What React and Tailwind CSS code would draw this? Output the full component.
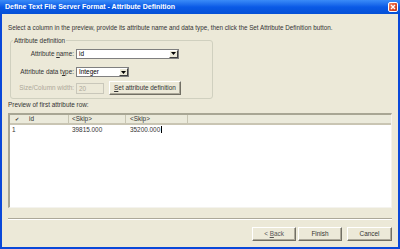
import React from "react";

function CloseBtn() {
  return (
    <div className="w-[10px] h-[10px] rounded-[2px] border border-white bg-gradient-to-br from-[#f08a6a] via-[#e0502c] to-[#c23a1c] flex items-center justify-center">
      <svg width="6" height="6" viewBox="0 0 6 6">
        <path d="M1 1 L5 5 M5 1 L1 5" stroke="white" strokeWidth="1.4" />
      </svg>
    </div>
  );
}

function DropBtn() {
  return (
    <div className="w-[9px] h-full bg-[#ece9d8] border-t border-l border-t-white border-l-white border-r border-b border-r-[#404040] border-b-[#404040] flex items-center justify-center">
      <svg width="5" height="3" viewBox="0 0 5 3">
        <path d="M0 0 H5 L2.5 3 Z" fill="black" />
      </svg>
    </div>
  );
}

function Btn({ children, className = "" }) {
  return (
    <div
      className={
        "h-[14px] bg-[#ece9d8] border-t border-l border-t-white border-l-white border-r border-b border-r-[#716f64] border-b-[#716f64] shadow-[inset_-1px_-1px_0_#aca899] flex items-center justify-center " +
        className
      }
    >
      {children}
    </div>
  );
}

export default function App() {
  return (
    <div className="w-[400px] h-[249px] bg-[#0a48d9] flex flex-col font-['Liberation_Sans',sans-serif] text-[6.4px] leading-[8px] text-black overflow-hidden">
      {/* title bar */}
      <div className="h-[14px] shrink-0 flex items-center justify-between pl-[5px] pr-[2px] bg-gradient-to-b from-[#3a8bf8] via-[#0a5ae6] to-[#0550d6]">
        <span className="text-white font-bold text-[7px] leading-[8px]">
          Define Text File Server Format - Attribute Definition
        </span>
        <CloseBtn />
      </div>

      <div className="flex-1 mx-[2px] mb-[2px] bg-[#ece9d8] flex flex-col px-[6px]">
        <div className="mt-[10px] h-[8px] text-[6.3px] text-[#333]">
          Select a column in the preview, provide its attribute name and data type, then click the Set Attribute Definition button.
        </div>

        {/* group box */}
        <div className="relative mt-[8px] ml-[2px] w-[203px] border border-[#d0d0bf] rounded-[3px] pt-[7px] pb-[4px] flex flex-col">
          <span className="absolute -top-[4px] left-[2px] px-[1px] bg-[#ece9d8] text-[#333]">
            Attribute definition
          </span>

          <div className="flex items-center h-[11px]">
            <div className="w-[65px] text-right pr-[2px] text-[#333]">
              Attribute <span className="underline">n</span>ame:
            </div>
            <div className="w-[103px] h-[10px] bg-white border border-[#7f7f7f] flex items-stretch">
              <div className="flex-1 pl-[2px] leading-[8px]">id</div>
              <DropBtn />
            </div>
          </div>

          <div className="flex items-center h-[10px] mt-[8px]">
            <div className="w-[65px] text-right pr-[2px] text-[#333]">
              Attribute data t<span className="underline">y</span>pe:
            </div>
            <div className="w-[53px] h-[10px] bg-white border border-[#7f7f7f] flex items-stretch">
              <div className="flex-1 pl-[2px] leading-[8px]">Integer</div>
              <DropBtn />
            </div>
          </div>

          <div className="flex items-center h-[12px] mt-[5px]">
            <div className="w-[65px] text-right pr-[2px] text-[#aca899]">
              Size/Column width:
            </div>
            <div className="w-[28px] h-[11px] bg-[#ece9d8] border border-[#c9c7ba] pl-[2px] text-[#aca899] leading-[9px]">
              20
            </div>
            <Btn className="ml-[5px] w-[72px] h-[12px] text-[#333]">
              <span>
                <span className="underline">S</span>et attribute definition
              </span>
            </Btn>
          </div>
        </div>

        <div className="mt-[2px] h-[8px] text-[#333]">Preview of first attribute row:</div>

        {/* table */}
        <div className="mt-[4px] h-[95px] w-[384px] bg-white border-t-2 border-l-2 border-t-[#a8a694] border-l-[#a8a694] border-r border-b border-r-[#f4f3ee] border-b-[#f4f3ee] flex flex-col">
          <div className="h-[10px] bg-[#ebeadb] border-b-2 border-b-[#c9c5b3] flex items-stretch text-[#333]">
            <div className="w-[59px] flex items-center border-r border-r-[#c7c5b2]">
              <span className="ml-[5px] text-[5px]">✔</span>
              <span className="ml-[10px]">id</span>
            </div>
            <div className="w-[57px] flex items-center pl-[3px] border-r border-r-[#c7c5b2]">
              &lt;Skip&gt;
            </div>
            <div className="w-[62px] flex items-center pl-[4px] border-r border-r-[#c7c5b2]">
              &lt;Skip&gt;
            </div>
            <div className="flex-1" />
          </div>
          <div className="flex items-center h-[9px] text-[#333]">
            <div className="w-[59px] pl-[2px]">1</div>
            <div className="w-[57px] pl-[3px]">39815.000</div>
            <div className="w-[62px] pl-[4px] flex items-center">
              35200.000
              <span className="inline-block w-[1px] h-[7px] bg-black ml-[1px]" />
            </div>
          </div>
        </div>

        {/* separator */}
        <div className="mt-[10px] h-[2px] border-t border-t-[#aca899] border-b border-b-white" />

        {/* buttons */}
        <div className="mt-[7px] flex justify-end text-[#333]">
          <Btn className="w-[44px] text-[#555]">
            <span>
              &lt; <span className="underline">B</span>ack
            </span>
          </Btn>
          <Btn className="w-[44px] ml-[2px]">Finish</Btn>
          <Btn className="w-[45px] ml-[5px]">Cancel</Btn>
        </div>
      </div>
    </div>
  );
}
